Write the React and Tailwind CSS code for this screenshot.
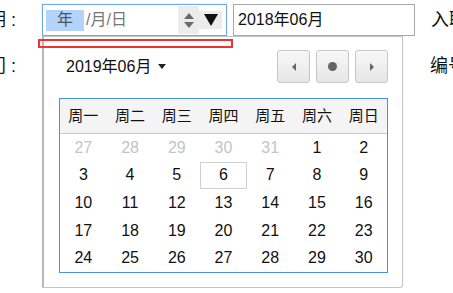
import React from "react";

const weekDays = ["周一", "周二", "周三", "周四", "周五", "周六", "周日"];

const days = [
  [27, 28, 29, 30, 31, 1, 2],
  [3, 4, 5, 6, 7, 8, 9],
  [10, 11, 12, 13, 14, 15, 16],
  [17, 18, 19, 20, 21, 22, 23],
  [24, 25, 26, 27, 28, 29, 30],
];

const NavButton = ({ children }) => (
  <button className="flex h-[33px] w-[33px] items-center justify-center rounded-[3px] border border-[#c6c6c6] bg-gradient-to-b from-[#f8f8f8] to-[#e6e6e6]">
    {children}
  </button>
);

const App = () => (
  <div
    className="relative h-[293px] w-[453px] overflow-hidden bg-white text-[#111]"
    style={{ fontFamily: '"Liberation Sans", "Noto Sans CJK SC", sans-serif' }}
  >
    {/* Row 1 */}
    <div className="flex items-center pt-[4px]">
      <div className="w-[42px] shrink-0 overflow-hidden">
        <span className="ml-[-30px] whitespace-nowrap text-[18px]">日期 :</span>
      </div>
      <div className="flex h-[32px] w-[185px] shrink-0 items-center border border-[#6fa8ee] pl-[3px] pr-[4px] shadow-[0_0_1px_#8fbef5]">
        <span className="flex h-[21px] w-[38px] items-center justify-center bg-[#b2d3fb] text-[16px] text-[#555]">年</span>
        <span className="ml-[2px] text-[16px] text-[#777]">/月/日</span>
        <div className="ml-auto flex h-[28px] w-[21px] flex-col items-center justify-center gap-[3px] bg-[#ececec]">
          <span className="h-0 w-0 border-x-[5px] border-b-[6px] border-x-transparent border-b-[#6a6a6a]" />
          <span className="h-0 w-0 border-x-[5px] border-t-[6px] border-x-transparent border-t-[#6a6a6a]" />
        </div>
        <div className="flex h-[18px] w-[23px] items-center justify-center bg-[#ececec]">
          <span className="h-0 w-0 border-x-[7px] border-t-[12px] border-x-transparent border-t-[#111]" />
        </div>
      </div>
      <div className="ml-[6px] flex h-[32px] w-[182px] shrink-0 items-center border border-[#a9a9a9] pl-[4px] text-[16px]">
        2018年06月
      </div>
      <div className="ml-[16px] shrink-0 whitespace-nowrap text-[18px]">入职日期:</div>
    </div>

    {/* Row 2 */}
    <div className="mt-[17px] flex items-center">
      <div className="w-[42px] shrink-0 overflow-hidden">
        <span className="ml-[-30px] whitespace-nowrap text-[18px]">部门 :</span>
      </div>
      <div className="ml-[388px] shrink-0 whitespace-nowrap text-[18px]">编号:</div>
    </div>

    {/* Date picker popup */}
    <div className="absolute left-[42px] top-[36px] h-[252px] w-[361px] rounded-br-[3px] border border-l-2 border-[#c4c4c4] border-l-[#b8b8b8] bg-white pl-[15px] pr-[14px] pt-[13px]">
      <div className="flex items-center">
        <div className="ml-[7px] flex items-center gap-[7px] text-[16px]">
          2019年06月
          <span className="h-0 w-0 border-x-[4px] border-t-[5px] border-x-transparent border-t-[#222]" />
        </div>
        <div className="ml-auto flex gap-[6px]">
          <NavButton>
            <span className="h-0 w-0 border-y-[4px] border-r-[4px] border-y-transparent border-r-[#666]" />
          </NavButton>
          <NavButton>
            <span className="h-[9px] w-[9px] rounded-full bg-[#666]" />
          </NavButton>
          <NavButton>
            <span className="h-0 w-0 border-y-[4px] border-l-[4px] border-y-transparent border-l-[#666]" />
          </NavButton>
        </div>
      </div>

      <div className="mt-[15px] w-[329px] border border-[#4a8ff0]">
        <div className="grid h-[35px] grid-cols-7 items-center border-b border-[#c8c8c8] bg-[#f4f4f4] text-[15px]">
          {weekDays.map((d) => (
            <div key={d} className="text-center">{d}</div>
          ))}
        </div>
        {days.map((row, r) => (
          <div key={r} className="grid h-[27.6px] grid-cols-7 items-center text-[16px]">
            {row.map((d, c) => (
              <div
                key={c}
                className={
                  "flex h-full items-center justify-center " +
                  (r === 0 && c < 5 ? "text-[#c4c4c4] " : "") +
                  (r === 1 && c === 3 ? "border border-[#d0d0d0]" : "")
                }
              >
                {d}
              </div>
            ))}
          </div>
        ))}
      </div>
    </div>

    {/* Red marker, over the popup */}
    <div className="absolute left-[38px] top-[39px] h-[9px] w-[195px] border-2 border-[#ee3333]" />
  </div>
);

export default App;
